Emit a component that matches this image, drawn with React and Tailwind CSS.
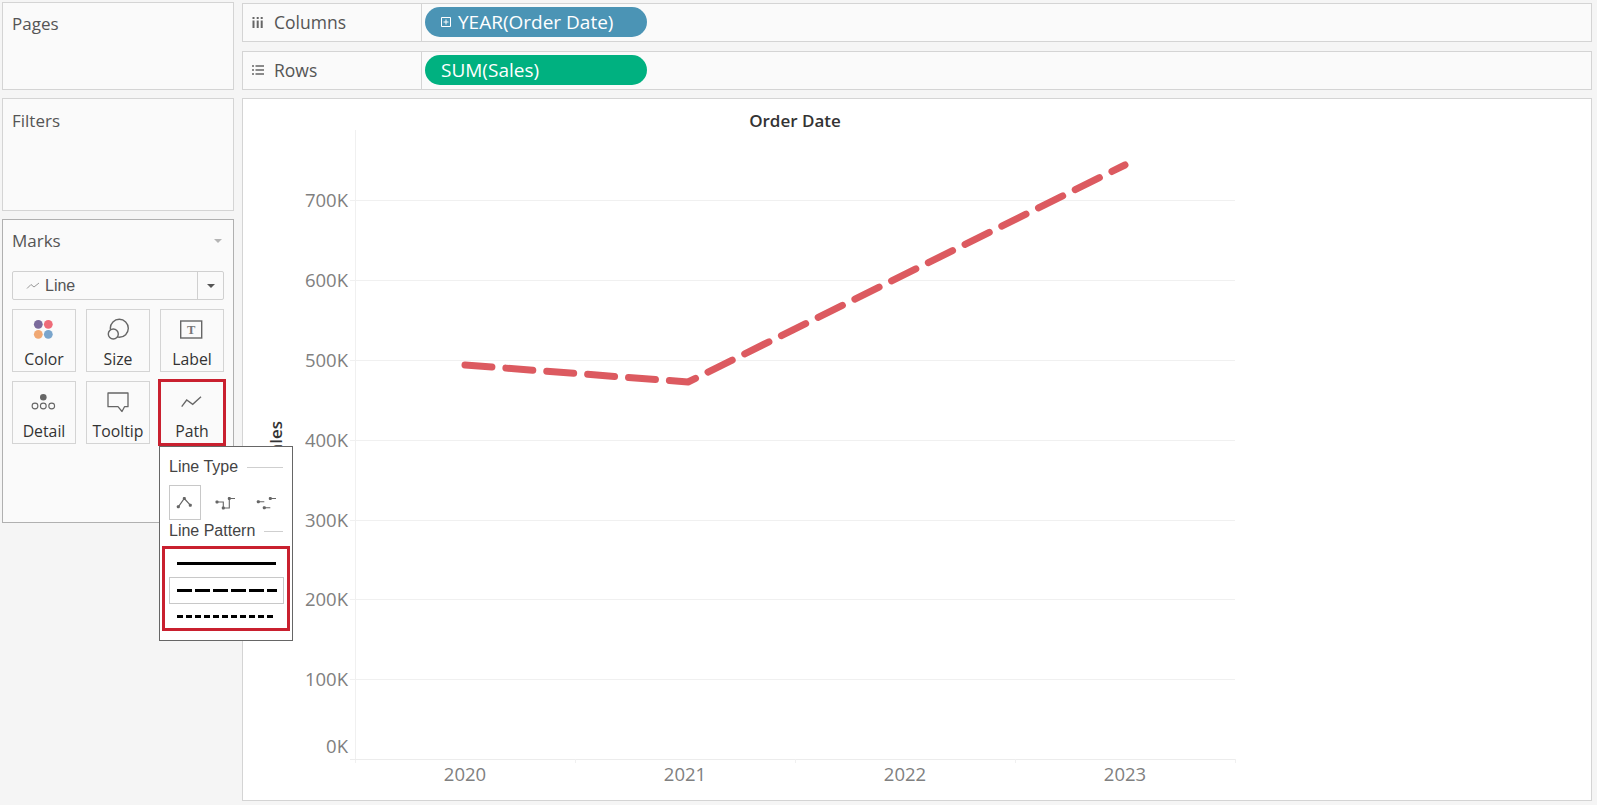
import React from "react";

const font = "font-['Open_Sans','Liberation_Sans',sans-serif]";
const armFont = "font-['Liberation_Sans',Arial,sans-serif]";

const ticks = [
  { label: "700K", y: 200 },
  { label: "600K", y: 280 },
  { label: "500K", y: 360 },
  { label: "400K", y: 440 },
  { label: "300K", y: 520 },
  { label: "200K", y: 599 },
  { label: "100K", y: 679 },
];

const years = [
  { label: "2020", x: 465 },
  { label: "2021", x: 685 },
  { label: "2022", x: 905 },
  { label: "2023", x: 1125 },
];

const Panel = ({ title, className }) => (
  <div className={`bg-[#fafafa] border border-[#d4d4d4] px-[9px] text-[17px] leading-6 text-[#555] ${className}`}>
    {title}
  </div>
);

const Shelf = ({ icon, label, pill, pillColor }) => (
  <div className="flex h-[39px] bg-[#fafafa] border border-[#d4d4d4]">
    <div className="flex w-[179px] items-center border-r border-[#d4d4d4] pb-px pl-[9px] text-[17.5px] text-[#555]">
      <span className="flex w-[22px] shrink-0">{icon}</span>
      {label}
    </div>
    <div className={`ml-[3px] mt-[3px] flex h-[30px] w-[222px] items-center rounded-full pl-[16px] text-[19px] text-white ${pillColor}`}>
      {pill}
    </div>
  </div>
);

const Card = ({ icon, label, className = "" }) => (
  <div className={`flex h-[63px] flex-col items-center border border-[#d4d4d4] bg-[#fafafa] ${className}`}>
    <svg width="40" height="30" viewBox="0 0 40 30" className="mt-[5px] shrink-0 text-[#666]">
      {icon}
    </svg>
    <span className="mt-[4px] text-[15.8px] leading-5 text-[#333]">{label}</span>
  </div>
);

const LineTypeIcon = ({ children, selected }) => (
  <div className={`flex h-[35px] w-[32px] items-center justify-center ${selected ? "border border-[#c8c8c8]" : "border border-transparent"}`}>
    <svg width="24" height="20" viewBox="0 0 24 20" className="text-[#666]">
      {children}
    </svg>
  </div>
);

const Dot = ({ x, y }) => <rect x={x - 1.5} y={y - 1.5} width="3" height="3" rx="1" fill="currentColor" />;

const PopupHeading = ({ label }) => (
  <div className={`flex items-center gap-[9px] px-[9px] text-[16px] leading-5 text-[#444] ${armFont}`}>
    <span className="whitespace-nowrap">{label}</span>
    <span className="h-px flex-1 bg-[#cfcfcf]" />
  </div>
);

const PatternPopup = () => (
  <div className="absolute left-[159px] top-[446px] z-10 h-[195px] w-[134px] border border-[#666] bg-white pt-[10px]">
    <PopupHeading label="Line Type" />
    <div className="mt-[8px] flex gap-[9px] pl-[9px]">
      <LineTypeIcon selected>
        <path d="M5.3 13.8 L11.3 5.5 L17.3 12.2" fill="none" stroke="currentColor" strokeWidth="1.2" />
        <Dot x={5.3} y={13.8} />
        <Dot x={11.3} y={5.5} />
        <Dot x={17.3} y={12.2} />
      </LineTypeIcon>
      <LineTypeIcon>
        <path d="M3 9 H9.3 V15 H15.3 V5.5 H21" fill="none" stroke="currentColor" strokeWidth="1.1" />
        <Dot x={3} y={9} />
        <Dot x={9.3} y={15} />
        <Dot x={15.3} y={5.5} />
      </LineTypeIcon>
      <LineTypeIcon>
        <path d="M3.3 8.8 H9.3 M9.3 14.8 H15.3 M15.3 5.5 H21" fill="none" stroke="currentColor" strokeWidth="1.1" />
        <Dot x={3.3} y={8.8} />
        <Dot x={9.3} y={14.8} />
        <Dot x={15.3} y={5.5} />
      </LineTypeIcon>
    </div>
    <div className="mt-px">
      <PopupHeading label="Line Pattern" />
    </div>
    <div className="ml-[2px] mt-[5px] h-[85px] w-[128px] border-[3px] border-[#c9202f] pt-[13px]">
      <div className="ml-[12px] h-[3px] w-[99px] bg-black" />
      <div className="ml-[4px] mt-[12px] flex h-[27px] w-[115px] items-center justify-center border border-[#c8c8c8]">
        <svg width="100" height="3" viewBox="0 0 100 3">
          <path d="M0 1.5 H100" stroke="#000" strokeWidth="3" strokeDasharray="15 3" />
        </svg>
      </div>
      <div className="ml-[12px] mt-[11px] h-[3px] w-[96px]">
        <svg width="96" height="3" viewBox="0 0 96 3" className="block">
          <path d="M0 1.5 H96" stroke="#000" strokeWidth="3" strokeDasharray="6 3" />
        </svg>
      </div>
    </div>
  </div>
);

const Chart = () => (
  <svg viewBox="243 99 1348 701" className="block h-full w-full">
    {ticks.map((t) => (
      <g key={t.label}>
        <line x1="350" x2="1235" y1={t.y + 0.5} y2={t.y + 0.5} stroke="#f0f0f0" />
        <text x="348" y={t.y + 7} textAnchor="end" fontSize="18.5" fill="#808080">{t.label}</text>
      </g>
    ))}
    <text x="348" y="753" textAnchor="end" fontSize="18.5" fill="#808080">0K</text>
    <line x1="355.5" x2="355.5" y1="130" y2="763" stroke="#f0f0f0" />
    <line x1="350" x2="1235" y1="759.5" y2="759.5" stroke="#ececec" />
    {[575, 795, 1015, 1235].map((x) => (
      <line key={x} x1={x + 0.5} x2={x + 0.5} y1="759" y2="763" stroke="#f0f0f0" />
    ))}
    {years.map((y) => (
      <text key={y.label} x={y.x} y="781" textAnchor="middle" fontSize="18.5" fill="#808080">{y.label}</text>
    ))}
    <text x="795" y="127" textAnchor="middle" fontSize="17" fontWeight="600" fill="#333">Order Date</text>
    <text transform="translate(282 442) rotate(-90)" textAnchor="middle" fontSize="17" fontWeight="600" fill="#333">Sales</text>
    <polyline
      points="465,365 688,382 1125,165"
      fill="none"
      stroke="#dc5a60"
      strokeWidth="7"
      strokeLinecap="round"
      strokeLinejoin="round"
      strokeDasharray="27 14"
    />
  </svg>
);

const App = () => {
  return (
    <div className={`relative flex h-[805px] w-[1597px] gap-[8px] overflow-hidden bg-[#f5f5f5] pl-[2px] pt-[2px] ${font}`}>
      <div className="flex w-[232px] shrink-0 flex-col gap-[8px]">
        <Panel title="Pages" className="h-[88px] pt-[9px]" />
        <Panel title="Filters" className="h-[113px] pt-[10px]" />
        <div className="relative h-[304px] border border-[#b0b0b0] bg-[#fafafa] px-[9px] pt-[9px]">
          <div className="flex items-center justify-between text-[17px] leading-6 text-[#555]">
            Marks
            <span className="mr-[2px] h-0 w-0 border-x-[4px] border-t-[4px] border-x-transparent border-t-[#b5b5b5]" />
          </div>
          <div className={`mt-[18px] flex h-[29px] items-center rounded-[2px] border border-[#d0d0d0] bg-[#fafafa] text-[16px] text-[#555] ${armFont}`}>
            <svg width="14" height="8" viewBox="0 0 14 8" className="ml-[13px] mr-[5px] text-[#999]">
              <path d="M1 6.5 L5 2.5 L8 5 L13 1" fill="none" stroke="currentColor" strokeWidth="1" />
            </svg>
            Line
            <span className="ml-auto flex h-full w-[26px] items-center justify-center border-l border-[#d0d0d0]">
              <span className="h-0 w-0 border-x-[4px] border-t-[4px] border-x-transparent border-t-[#555]" />
            </span>
          </div>
          <div className="mt-[9px] grid grid-cols-[64px_64px_64px] gap-x-[10px] gap-y-[9px]">
            <Card
              label="Color"
              icon={
                <>
                  <circle cx="14.3" cy="9.3" r="4.4" fill="#7b6b9c" />
                  <circle cx="24.3" cy="9.3" r="4.4" fill="#ee6b78" />
                  <circle cx="14.3" cy="19.3" r="4.4" fill="#f0a873" />
                  <circle cx="24.3" cy="19.3" r="4.4" fill="#7aa5cc" />
                </>
              }
            />
            <Card
              label="Size"
              icon={
                <>
                  <circle cx="21.3" cy="13.3" r="9" fill="none" stroke="currentColor" strokeWidth="1.4" />
                  <circle cx="15.3" cy="19" r="5" fill="#fafafa" stroke="currentColor" strokeWidth="1.4" />
                </>
              }
            />
            <Card
              label="Label"
              icon={
                <>
                  <rect x="8.7" y="6" width="21" height="17" fill="none" stroke="currentColor" strokeWidth="1.4" />
                  <text x="19.2" y="19" textAnchor="middle" fontSize="12.5" fontWeight="700" fontFamily="Liberation Serif, serif" fill="#777">T</text>
                </>
              }
            />
            <Card
              label="Detail"
              icon={
                <>
                  <circle cx="19.3" cy="10.3" r="3.3" fill="currentColor" />
                  <circle cx="11" cy="19" r="2.9" fill="none" stroke="currentColor" strokeWidth="1.1" />
                  <circle cx="19.3" cy="19" r="2.9" fill="none" stroke="currentColor" strokeWidth="1.1" />
                  <circle cx="27.7" cy="19" r="2.9" fill="none" stroke="currentColor" strokeWidth="1.1" />
                </>
              }
            />
            <Card
              label="Tooltip"
              icon={
                <path d="M10 6 H30 V19.7 H26.5 L24 24.5 L20 19.7 H10 Z" fill="none" stroke="currentColor" strokeWidth="1.3" strokeLinejoin="round" />
              }
            />
            <Card
              label="Path"
              className="outline-[3px] -outline-offset-1 outline-[#c9202f]"
              icon={
                <path d="M9.7 19.7 L14.7 13 L20.7 17.3 L29 9.7" fill="none" stroke="currentColor" strokeWidth="1.3" />
              }
            />
          </div>
        </div>
      </div>
      <div className="flex w-[1350px] shrink-0 flex-col">
        <div className="mt-px">
          <Shelf
            label="Columns"
            pillColor="bg-[#4b94b5]"
            icon={
              <svg width="12" height="12" viewBox="0 0 12 12" className="text-[#666]">
                <path d="M1.5 1 V3 M5.7 1 V3 M9.7 1 V3 M1.5 4.5 V12 M5.7 4.5 V12 M9.7 4.5 V12" stroke="currentColor" strokeWidth="2" fill="none" />
              </svg>
            }
            pill={
              <>
                <svg width="10" height="10" viewBox="0 0 10 10" className="mr-[7px]">
                  <path d="M.5 .5 H9.5 V9.5 H.5 Z M2.5 5 H7.5 M5 2.5 V7.5" fill="none" stroke="#fff" strokeWidth="1" />
                </svg>
                YEAR(Order Date)
              </>
            }
          />
        </div>
        <div className="mt-[9px]">
          <Shelf
            label="Rows"
            pillColor="bg-[#00b180]"
            icon={
              <svg width="12" height="10" viewBox="0 0 12 10" className="text-[#666]">
                <path d="M0 1 H2 M3.5 1 H12 M0 5 H2 M3.5 5 H12 M0 9 H2 M3.5 9 H12" stroke="currentColor" strokeWidth="1.6" />
              </svg>
            }
            pill="SUM(Sales)"
          />
        </div>
        <div className="mt-[8px] h-[703px] border border-[#d4d4d4] bg-white">
          <Chart />
        </div>
      </div>
      <PatternPopup />
    </div>
  );
};

export default App;
